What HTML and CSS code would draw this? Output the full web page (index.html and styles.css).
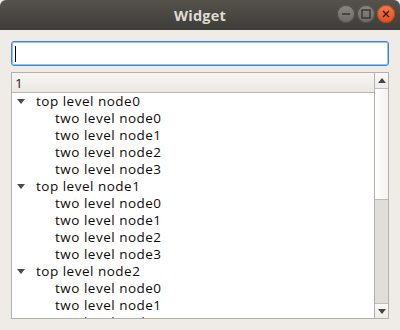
FILE: index.html
```html
<!DOCTYPE html>
<html>
<head>
<meta charset="utf-8">
<link rel="stylesheet" href="styles.css">
</head>
<body>
<div class="window">
  <div class="titlebar">
    <span class="title">Widget</span>
    <div class="controls">
      <span class="wbtn"><svg width="18" height="18" viewBox="0 0 18 18"><path d="M5 9h8" stroke="#2f2e2b" stroke-width="1.4"/></svg></span>
      <span class="wbtn"><svg width="18" height="18" viewBox="0 0 18 18"><rect x="5" y="5" width="8" height="8" fill="none" stroke="#2f2e2b" stroke-width="1.3"/></svg></span>
      <span class="wbtn close"><svg width="18" height="18" viewBox="0 0 18 18"><path d="M6 6l6 6M12 6l-6 6" stroke="#3a1a10" stroke-width="1.4"/></svg></span>
    </div>
  </div>
  <div class="content">
    <div class="lineedit"><span class="cursor"></span></div>
    <div class="tree">
      <div class="view">
        <div class="header">1</div>
        <div class="rows">
          <div class="row top"><span class="arrow"></span>top level node0</div>
          <div class="row child">two level node0</div>
          <div class="row child">two level node1</div>
          <div class="row child">two level node2</div>
          <div class="row child">two level node3</div>
          <div class="row top"><span class="arrow"></span>top level node1</div>
          <div class="row child">two level node0</div>
          <div class="row child">two level node1</div>
          <div class="row child">two level node2</div>
          <div class="row child">two level node3</div>
          <div class="row top"><span class="arrow"></span>top level node2</div>
          <div class="row child">two level node0</div>
          <div class="row child">two level node1</div>
          <div class="row child">two level node2</div>
        </div>
      </div>
      <div class="scrollbar">
        <div class="sbtn up"><span class="tri-up"></span></div>
        <div class="handle"></div>
        <div class="trough"></div>
        <div class="sbtn down"><span class="tri-down"></span></div>
      </div>
    </div>
  </div>
</div>
</body>
</html>
```
FILE: styles.css
```css
html, body {
  margin: 0;
  padding: 0;
  width: 400px;
  height: 330px;
  overflow: hidden;
  background: #efebe7;
  font-family: "Open Sans", "Noto Sans", sans-serif;
}
.window {
  display: flex;
  flex-direction: column;
  height: 330px;
}
.titlebar {
  position: relative;
  height: 30px;
  flex: none;
  background: linear-gradient(#55524c, #3e3d39);
  border-radius: 6px 6px 0 0;
  display: flex;
  align-items: center;
  justify-content: center;
}
.title {
  color: #dfdbd2;
  font-weight: bold;
  font-size: 14.5px;
  letter-spacing: 0.2px;
}
.controls {
  position: absolute;
  right: 5px;
  top: 5px;
  display: flex;
  gap: 2px;
}
.wbtn {
  width: 18px;
  height: 18px;
  border-radius: 50%;
  background: linear-gradient(#8a8782, #6c6a65);
  box-shadow: inset 0 0 0 1px #4d4b47;
  display: flex;
}
.wbtn.close {
  background: linear-gradient(#f27a4c, #e0501f);
  box-shadow: inset 0 0 0 1px #b84517;
}
.content {
  flex: 1;
  padding: 11px 11px 11px 11px;
  display: flex;
  flex-direction: column;
  gap: 6px;
  min-height: 0;
}
.lineedit {
  height: 23px;
  flex: none;
  background: #fff;
  border: 1px solid #3d86c2;
  border-radius: 3px;
  box-shadow: inset 0 0 0 1px #9cc3e3;
  display: flex;
  align-items: center;
  padding-left: 3px;
}
.cursor {
  width: 1px;
  height: 16px;
  background: #000;
}
.tree {
  height: 245px;
  flex: none;
  border: 1px solid #b4b0aa;
  background: #fff;
  display: flex;
  overflow: hidden;
}
.view {
  flex: 1;
  display: flex;
  flex-direction: column;
  overflow: hidden;
}
.header {
  height: 20px;
  flex: none;
  box-sizing: border-box;
  border-bottom: 1px solid #b9b5af;
  background: linear-gradient(#f8f6f3, #ebe8e3);
  color: #2a1808;
  font-size: 13.5px;
  line-height: 21px;
  padding-left: 3px;
}
.rows {
  flex: 1;
  overflow: hidden;
}
.row {
  height: 17px;
  line-height: 17px;
  font-size: 13.5px;
  letter-spacing: 0.5px;
  color: #0e0b08;
  white-space: nowrap;
  display: flex;
  align-items: center;
}
.row.top {
  padding-left: 5px;
}
.row.child {
  padding-left: 43px;
}
.arrow {
  width: 0;
  height: 0;
  border-left: 4px solid transparent;
  border-right: 4px solid transparent;
  border-top: 5px solid #4a4a4a;
  margin-right: 11px;
}
.scrollbar {
  width: 14px;
  flex: none;
  box-sizing: border-box;
  border-left: 1px solid #b4b0aa;
  display: flex;
  flex-direction: column;
  background: #dfdedb;
}
.sbtn {
  height: 15px;
  flex: none;
  background: linear-gradient(#faf9f7, #eeece9);
  display: flex;
  align-items: center;
  justify-content: center;
}
.sbtn.up {
  border-bottom: 1px solid #c3c0bb;
}
.sbtn.down {
  border-top: 1px solid #c3c0bb;
  height: 14px;
}
.tri-up {
  width: 0; height: 0;
  border-left: 4px solid transparent;
  border-right: 4px solid transparent;
  border-bottom: 5px solid #444;
}
.tri-down {
  width: 0; height: 0;
  border-left: 4px solid transparent;
  border-right: 4px solid transparent;
  border-top: 5px solid #444;
}
.handle {
  height: 110px;
  flex: none;
  background: linear-gradient(90deg, #ffffff, #f3f2f0);
  border-bottom: 1px solid #bdbab5;
}
.trough {
  flex: 1;
  background: #dfdedb;
}
```
